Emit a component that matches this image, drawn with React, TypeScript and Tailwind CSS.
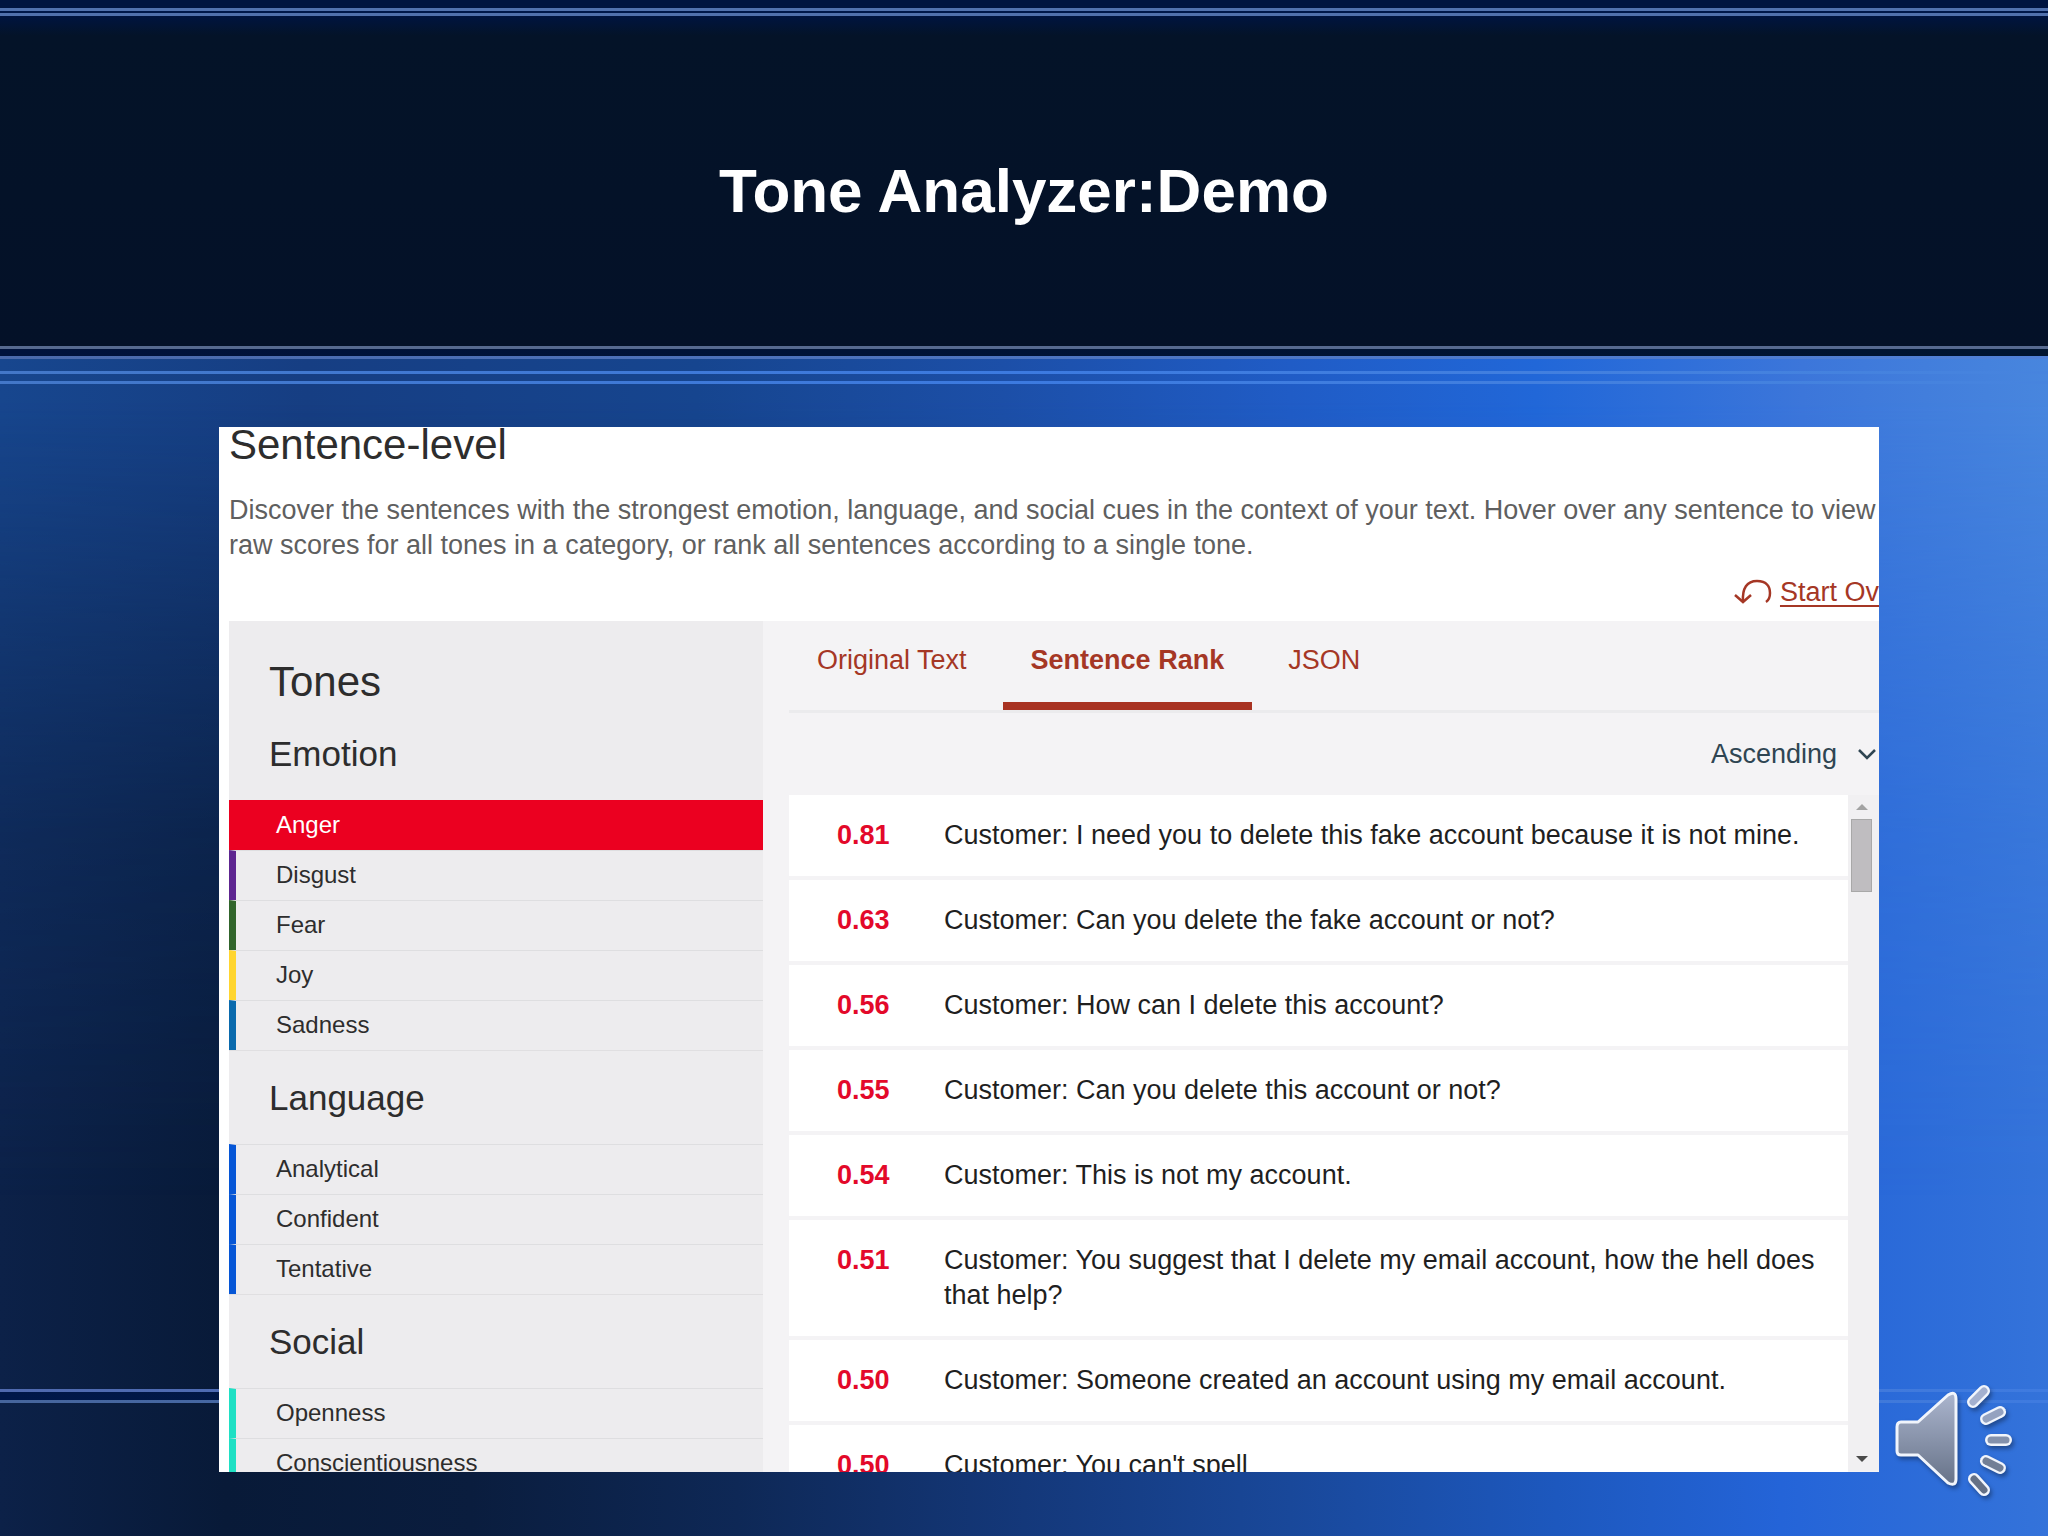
import { useState } from 'react';

type Tone = { name: string; stripe: string };

const GROUPS: { title: string; tones: Tone[] }[] = [
  {
    title: 'Emotion',
    tones: [
      { name: 'Anger', stripe: 'border-l-[#eb0020]' },
      { name: 'Disgust', stripe: 'border-l-[#5e2590]' },
      { name: 'Fear', stripe: 'border-l-[#31652b]' },
      { name: 'Joy', stripe: 'border-l-[#ffd52f]' },
      { name: 'Sadness', stripe: 'border-l-[#0a6aad]' },
    ],
  },
  {
    title: 'Language',
    tones: [
      { name: 'Analytical', stripe: 'border-l-[#0656d6]' },
      { name: 'Confident', stripe: 'border-l-[#0656d6]' },
      { name: 'Tentative', stripe: 'border-l-[#0656d6]' },
    ],
  },
  {
    title: 'Social',
    tones: [
      { name: 'Openness', stripe: 'border-l-[#1fe0c4]' },
      { name: 'Conscientiousness', stripe: 'border-l-[#1fe0c4]' },
    ],
  },
];

const SENTENCES = [
  { score: '0.81', text: 'Customer: I need you to delete this fake account because it is not mine.' },
  { score: '0.63', text: 'Customer: Can you delete the fake account or not?' },
  { score: '0.56', text: 'Customer: How can I delete this account?' },
  { score: '0.55', text: 'Customer: Can you delete this account or not?' },
  { score: '0.54', text: 'Customer: This is not my account.' },
  { score: '0.51', text: 'Customer: You suggest that I delete my email account, how the hell does that help?' },
  { score: '0.50', text: 'Customer: Someone created an account using my email account.' },
  { score: '0.50', text: "Customer: You can't spell" },
];

const TABS = ['Original Text', 'Sentence Rank', 'JSON'];

// Sound waves beside the speaker, one rounded bar each.
const WAVES = [
  { d: 'M79 20L90 9', fill: '#a3b0cf' },
  { d: 'M92 37L106 30', fill: '#94a2c0' },
  { d: 'M97 58H112', fill: '#8391ac' },
  { d: 'M92 79L106 86', fill: '#727f96' },
  { d: 'M80 97L90 108', fill: '#657186' },
];

export default function App() {
  return (
    <div className="relative flex h-screen flex-col overflow-hidden font-['Liberation_Sans',Arial,sans-serif]">
      <Backdrop />
      <SlideHeader />
      <main className="relative mt-[42px] mr-[169px] mb-16 ml-[219px] min-h-0 flex-1 overflow-hidden bg-white pl-[10px] text-[27px] leading-[35px]">
        <SentencePanel />
      </main>
      <SpeakerIcon />
    </div>
  );
}

function Backdrop() {
  return (
    <div
      aria-hidden="true"
      className="absolute inset-0 bg-[linear-gradient(90deg,#0c2148_0%,#081a38_11%,#0a1d3e_23%,#0e2856_36%,#14387a_50%,#19489a_63%,#1d58be_76%,#2464d8_87%,#3473da_100%)]"
    >
      <div className="absolute inset-0 bg-[linear-gradient(90deg,#17468e_0%,#163e83_15%,#16458f_34%,#1c4fa8_49%,#205cc6_63%,#2167d8_75%,#3c76da_88%,#4886de_100%)] mask-[linear-gradient(180deg,#000_26%,#0009_40%,#0004_54%,transparent_78%)]" />
      <div className="absolute inset-x-0 bottom-[133px] flex flex-col gap-[8px] bg-[linear-gradient(90deg,#001748_0%,#00174800_60%)]">
        <div className="h-[3px] bg-linear-to-r from-[#4f69ae] to-[#3f7be0]" />
        <div className="h-[3px] bg-linear-to-r from-[#46659c] to-[#3f7be0]" />
      </div>
    </div>
  );
}

function SlideHeader() {
  return (
    <header className="relative">
      <div className="h-[8px] bg-[#00143f]" />
      <div className="h-[3px] bg-[#5171ad]" />
      <div className="h-[2px] bg-[#00184a]" />
      <div className="h-[3px] bg-[#5171ad]" />
      <div className="flex h-[330px] items-center justify-center bg-linear-to-b from-[#001440] via-[#041328] via-6% to-[#041128]">
        <h1 className="pt-5 text-[62px] leading-none font-bold text-white">Tone Analyzer:Demo</h1>
      </div>
      <div className="h-[3px] bg-[#56698f]" />
      <div className="h-[7px] bg-linear-to-r from-[#00123c] to-[#001430]" />
      <div className="h-[3px] bg-linear-to-r from-[#4a69ab] to-[#4f80d8]" />
      <div className="mt-3 h-[3px] bg-linear-to-r from-[#4377c8] via-[#3c7ae0] to-[#4784de]" />
      <div className="mt-[7px] mb-[1px] h-[3px] bg-linear-to-r from-[#4377c8] via-[#3c7ae0] to-[#4784de]" />
    </header>
  );
}

function SentencePanel() {
  return (
    <div className="-mr-6 flex flex-col">
      <h2 className="h-[66px] text-[42px] leading-[36px] text-[#2d2d2d]">Sentence-level</h2>
      <p className="text-[#5f5f5f]">
        Discover the sentences with the strongest emotion, language, and social cues in the context of your text.
        Hover over any sentence to view raw scores for all tones in a category, or rank all sentences according to a
        single tone.
      </p>
      <div className="flex h-[58px] items-center justify-end gap-2 text-[#a53725]">
        <svg viewBox="0 0 38 26" className="h-[26px] w-[38px]" fill="none" stroke="currentColor" strokeWidth="2.5">
          <path d="M9 23C8 9 13 2 23 2s13 6 13 12c0 4-1 7-4 9" />
          <path d="M1 16l8 7 8-7" />
        </svg>
        <a href="#start" className="underline decoration-2 underline-offset-4">
          Start Over
        </a>
      </div>
      <div className="flex items-start">
        <ToneSidebar />
        <Results />
      </div>
    </div>
  );
}

function ToneSidebar() {
  const [active, setActive] = useState('Anger');
  return (
    <nav className="w-[534px] shrink-0 bg-[#edecee] text-[#2d2d2d]">
      <h3 className="h-[85px] pt-[43px] pl-10 text-[42px]">Tones</h3>
      {GROUPS.map((group) => (
        <section key={group.title} className="border-t border-[#e0dfe1] first-of-type:border-transparent">
          <h4 className="flex h-[93px] items-center pl-10 text-[35px]">{group.title}</h4>
          {group.tones.map((tone) => (
            <button
              key={tone.name}
              type="button"
              onClick={() => setActive(tone.name)}
              className={`block h-[50px] w-full border-t border-l-[7px] pb-[2px] pl-10 text-left text-[24px] ${tone.stripe} ${
                tone.name === active ? 'border-t-[#eb0020] bg-[#eb0020] text-white' : 'border-t-[#dedee0]'
              }`}
            >
              {tone.name}
            </button>
          ))}
        </section>
      ))}
    </nav>
  );
}

function Results() {
  const [tab, setTab] = useState('Sentence Rank');
  return (
    <section className="flex-1 bg-[#f4f3f5] pl-[26px]">
      <div className="flex gap-2 border-b-[3px] border-[#ebebed]">
        {TABS.map((name) => (
          <button
            key={name}
            type="button"
            onClick={() => setTab(name)}
            className={`h-[89px] border-b-8 px-7 pb-[2px] text-[#a53725] ${
              name === tab ? 'border-[#a83222] font-bold' : 'border-transparent'
            }`}
          >
            {name}
          </button>
        ))}
      </div>
      <div className="flex h-[82px] items-center justify-end pr-[26px] text-[#2f4552]">
        <select aria-label="Sort order" className="w-[146px] appearance-none bg-transparent">
          <option>Ascending</option>
          <option>Descending</option>
        </select>
        <svg viewBox="0 0 20 12" className="h-3 w-5" fill="none" stroke="currentColor" strokeWidth="2.5">
          <path d="M2 2l8 8 8-8" />
        </svg>
      </div>
      <div className="flex">
        <ul className="flex flex-1 flex-col gap-1">
          {SENTENCES.map((s) => (
            <li key={s.text} className="flex bg-white py-[23px] pr-5 pl-12">
              <span className="w-[107px] shrink-0 font-bold text-[#e3092a]">{s.score}</span>
              <span className="text-[#1f1f1f]">{s.text}</span>
            </li>
          ))}
        </ul>
        <Scrollbar />
      </div>
    </section>
  );
}

function Scrollbar() {
  return (
    <div className="mr-[24px] flex h-[676px] w-[31px] flex-col items-center bg-[#f1f0f2] pr-[4px]">
      <svg viewBox="0 0 12 6" className="mt-[9px] mb-[9px] h-[6px] w-3 shrink-0" fill="#a3a3a3">
        <path d="M0 6l6-6 6 6z" />
      </svg>
      <div className="h-[73px] w-[21px] border border-[#a8a8a8] bg-[#bfbdc0]" />
      <svg viewBox="0 0 12 6" className="mt-auto mb-[9px] h-[6px] w-3 shrink-0" fill="#4a4a4a">
        <path d="M0 0h12l-6 6z" />
      </svg>
    </div>
  );
}

function SpeakerIcon() {
  return (
    <svg
      viewBox="0 0 122 118"
      className="absolute right-[32px] bottom-[36px] h-[118px] w-[122px] drop-shadow-[2px_3px_2px_#0005]"
      strokeLinejoin="round"
      strokeLinecap="round"
    >
      <defs>
        <linearGradient id="metal" x1="0" y1="0" x2="0" y2="118" gradientUnits="userSpaceOnUse">
          <stop offset="0" stopColor="#b3bdd6" />
          <stop offset="1" stopColor="#5b677c" />
        </linearGradient>
      </defs>
      <path
        d="M7 40H24L54 13Q62 8 62 17V97Q62 105 54 101L24 73H7Q3 73 3 69V45Q3 40 7 40Z"
        fill="url(#metal)"
        stroke="#f1f5fc"
        strokeWidth="3"
      />
      {WAVES.map((wave) => (
        <g key={wave.d}>
          <path d={wave.d} stroke="#f1f5fc" strokeWidth="12" />
          <path d={wave.d} stroke={wave.fill} strokeWidth="7" />
        </g>
      ))}
    </svg>
  );
}
